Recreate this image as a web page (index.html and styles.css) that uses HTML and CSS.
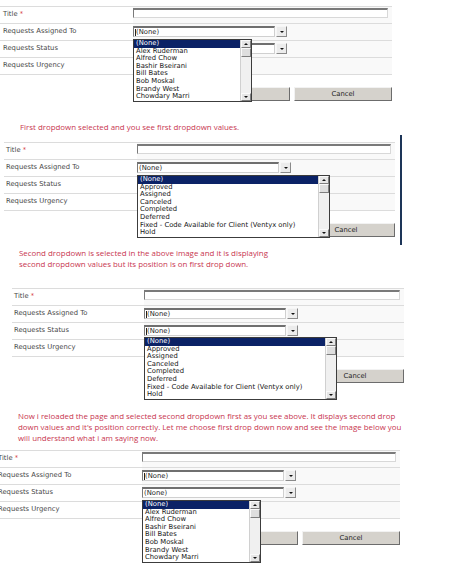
FILE: index.html
```html
<!DOCTYPE html>
<html>
<head>
<meta charset="utf-8">
<link rel="stylesheet" href="styles.css">
</head>
<body>
<div class="page">

  <!-- Panel 1 -->
  <div class="shot s1">
    <div class="sheet">
      <div class="form">
        <div class="row"><div class="lbl">Title <span class="req">*</span></div><div class="fld"><span class="input"></span></div></div>
        <div class="row"><div class="lbl">Requests Assigned To</div><div class="fld">
          <div class="select"><span class="val"><i class="caret"></i>(None)</span><span class="arr"><b></b></span></div>
          <div class="list">
            <div class="items">
              <div class="item sel">(None)</div>
              <div class="item">Alex Ruderman</div>
              <div class="item">Alfred Chow</div>
              <div class="item">Bashir Bseirani</div>
              <div class="item">Bill Bates</div>
              <div class="item">Bob Moskal</div>
              <div class="item">Brandy West</div>
              <div class="item">Chowdary Marri</div>
            </div>
            <div class="sb"><span class="up"><b></b></span><span class="thumb"></span><span class="track"></span><span class="down"><b></b></span></div>
          </div>
        </div></div>
        <div class="row"><div class="lbl">Requests Status</div><div class="fld">
          <div class="select"><span class="val">(None)</span><span class="arr"><b></b></span></div>
        </div></div>
        <div class="row"><div class="lbl">Requests Urgency</div><div class="fld"></div></div>
      </div>
      <div class="btns"><span class="btn">OK</span><span class="btn">Cancel</span></div>
    </div>
  </div>
  <p class="note n1">First dropdown selected and you see first dropdown values.</p>

  <!-- Panel 2 -->
  <div class="shot s2">
    <div class="sheet">
      <div class="form">
        <div class="row"><div class="lbl">Title <span class="req">*</span></div><div class="fld"><span class="input"></span></div></div>
        <div class="row"><div class="lbl">Requests Assigned To</div><div class="fld">
          <div class="select"><span class="val">(None)</span><span class="arr"><b></b></span></div>
          <div class="list wide">
            <div class="items">
              <div class="item sel">(None)</div>
              <div class="item">Approved</div>
              <div class="item">Assigned</div>
              <div class="item">Canceled</div>
              <div class="item">Completed</div>
              <div class="item">Deferred</div>
              <div class="item">Fixed - Code Available for Client (Ventyx only)</div>
              <div class="item">Hold</div>
            </div>
            <div class="sb"><span class="up"><b></b></span><span class="thumb"></span><span class="track"></span><span class="down"><b></b></span></div>
          </div>
        </div></div>
        <div class="row"><div class="lbl">Requests Status</div><div class="fld">
          <div class="select"><span class="val">(None)</span><span class="arr"><b></b></span></div>
        </div></div>
        <div class="row"><div class="lbl">Requests Urgency</div><div class="fld"></div></div>
      </div>
      <div class="btns"><span class="btn">OK</span><span class="btn">Cancel</span></div>
    </div>
  </div>
  <p class="note n2">Second dropdown is selected in the above image and it is displaying<br>second dropdown values but its position is on first drop down.</p>

  <!-- Panel 3 -->
  <div class="shot s3">
    <div class="sheet">
      <div class="form">
        <div class="row"><div class="lbl">Title <span class="req">*</span></div><div class="fld"><span class="input"></span></div></div>
        <div class="row"><div class="lbl">Requests Assigned To</div><div class="fld">
          <div class="select"><span class="val"><i class="caret"></i>(None)</span><span class="arr"><b></b></span></div>
        </div></div>
        <div class="row"><div class="lbl">Requests Status</div><div class="fld">
          <div class="select"><span class="val"><i class="caret"></i>(None)</span><span class="arr"><b></b></span></div>
          <div class="list wide">
            <div class="items">
              <div class="item sel">(None)</div>
              <div class="item">Approved</div>
              <div class="item">Assigned</div>
              <div class="item">Canceled</div>
              <div class="item">Completed</div>
              <div class="item">Deferred</div>
              <div class="item">Fixed - Code Available for Client (Ventyx only)</div>
              <div class="item">Hold</div>
            </div>
            <div class="sb"><span class="up"><b></b></span><span class="thumb"></span><span class="track"></span><span class="down"><b></b></span></div>
          </div>
        </div></div>
        <div class="row"><div class="lbl">Requests Urgency</div><div class="fld"></div></div>
      </div>
      <div class="btns"><span class="btn">OK</span><span class="btn">Cancel</span></div>
    </div>
  </div>
  <p class="note n3">Now i reloaded the page and selected second dropdown first as you see above. It displays second drop<br>down values and it's position correctly. Let me choose first drop down now and see the image below you<br>will understand what i am saying now.</p>

  <!-- Panel 4 -->
  <div class="shot s4">
    <div class="sheet">
      <div class="form">
        <div class="row"><div class="lbl">Title <span class="req">*</span></div><div class="fld"><span class="input"></span></div></div>
        <div class="row"><div class="lbl">Requests Assigned To</div><div class="fld">
          <div class="select"><span class="val"><i class="caret"></i>(None)</span><span class="arr"><b></b></span></div>
        </div></div>
        <div class="row"><div class="lbl">Requests Status</div><div class="fld">
          <div class="select"><span class="val">(None)</span><span class="arr"><b></b></span></div>
          <div class="list">
            <div class="items">
              <div class="item sel">(None)</div>
              <div class="item">Alex Ruderman</div>
              <div class="item">Alfred Chow</div>
              <div class="item">Bashir Bseirani</div>
              <div class="item">Bill Bates</div>
              <div class="item">Bob Moskal</div>
              <div class="item">Brandy West</div>
              <div class="item">Chowdary Marri</div>
            </div>
            <div class="sb"><span class="up"><b></b></span><span class="thumb"></span><span class="track"></span><span class="down"><b></b></span></div>
          </div>
        </div></div>
        <div class="row"><div class="lbl">Requests Urgency</div><div class="fld"></div></div>
      </div>
      <div class="btns"><span class="btn">OK</span><span class="btn">Cancel</span></div>
    </div>
  </div>

</div>
</body>
</html>
```

FILE: styles.css
```css
html, body {
  margin: 0;
  padding: 0;
  background: #ffffff;
}
body {
  width: 474px;
  height: 579px;
  overflow: hidden;
  font-family: "DejaVu Sans", Verdana, sans-serif;
}
.page {
  display: flex;
  flex-direction: column;
}

/* screenshot panels */
.shot {
  position: relative;
}
.s1 { margin-top: 6px; }
.s2 {
  margin-top: 2px;
  width: 400px;
  padding: 7px 0 8px 0;
  border-right: 2px solid #1d3558;
}
.s3 { margin-top: 18px; }
.s4 { margin-top: 6px; }

.sheet {
  display: flex;
  flex-direction: column;
}
.s1 .sheet { margin-left: 0; width: 392px; --lc: 133px; --lp: 3px; }
.s2 .sheet { margin-left: 4px; width: 391px; --lc: 133px; --lp: 2px; }
.s3 .sheet { margin-left: 12px; width: 392px; --lc: 132px; --lp: 2px; }
.s4 .sheet { margin-left: -4px; width: 404px; --lc: 146px; --lp: 2px; }

.form {
  display: flex;
  flex-direction: column;
  border-bottom: 1px solid #dcdcdc;
}
.row {
  display: grid;
  grid-template-columns: var(--lc) 1fr;
  height: 17px;
  box-sizing: border-box;
  border-top: 1px solid #dcdcdc;
}
.lbl {
  padding-left: var(--lp);
  padding-top: 3px;
  font-size: 6.8px;
  line-height: 8px;
  color: #474747;
  white-space: nowrap;
}
.req { color: #d2302f; }
.fld {
  position: relative;
  background: #f9f9f9;
}

.input {
  display: block;
  width: calc(100% - 4px);
  height: 10px;
  margin-top: 1px;
  box-sizing: border-box;
  background: #ffffff;
  border-style: solid;
  border-width: 2px 1px 1px 1px;
  border-color: #7a7a7a #d8d8d8 #d8d8d8 #7a7a7a;
}

.select {
  display: flex;
  width: 154px;
  height: 11px;
  margin-top: 2px;
  box-sizing: border-box;
}
.select .val {
  flex: 1;
  display: flex;
  align-items: center;
  background: #ffffff;
  border-style: solid;
  border-width: 2px 1px 1px 1px;
  border-color: #6f6f6f #d0d0d0 #d0d0d0 #7a7a7a;
  font-size: 6.8px;
  line-height: 8px;
  color: #1a1a1a;
  padding-left: 1px;
  white-space: nowrap;
  overflow: hidden;
}
.caret {
  display: inline-block;
  width: 1px;
  height: 7px;
  background: #222;
}
.select .arr {
  width: 11px;
  margin-left: 1px;
  box-sizing: border-box;
  background: #ececec;
  border: 1px solid;
  border-color: #f6f6f6 #8a8a8a #8a8a8a #f6f6f6;
  display: flex;
  align-items: center;
  justify-content: center;
}
.arr b, .down b {
  display: block;
  width: 0;
  height: 0;
  border-left: 2px solid transparent;
  border-right: 2px solid transparent;
  border-top: 2px solid #111;
}
.up b {
  display: block;
  width: 0;
  height: 0;
  border-left: 2px solid transparent;
  border-right: 2px solid transparent;
  border-bottom: 2px solid #111;
}

/* open dropdown list (overlay) */
.list {
  position: absolute;
  left: 0;
  top: 15px;
  width: 119px;
  height: 63px;
  box-sizing: border-box;
  display: flex;
  background: #ffffff;
  border: 1px solid #3c3c3c;
  z-index: 5;
}
.s3 .list { top: 14px; }
.list.wide { width: 193px; }
.items {
  flex: 1;
  overflow: hidden;
}
.item {
  height: 7.6px;
  font-size: 6.8px;
  line-height: 7.6px;
  padding-left: 2px;
  color: #151515;
  white-space: nowrap;
}
.item.sel {
  background: #0b2266;
  color: #ffffff;
}
.sb {
  width: 10px;
  display: flex;
  flex-direction: column;
  background: #f0f0f0;
  border-left: 1px solid #d0d0d0;
}
.sb .up, .sb .down {
  height: 8px;
  box-sizing: border-box;
  background: #e6e6e6;
  border: 1px solid;
  border-color: #fafafa #7d7d7d #7d7d7d #fafafa;
  display: flex;
  align-items: center;
  justify-content: center;
}
.sb .thumb {
  height: 9px;
  box-sizing: border-box;
  background: #dedede;
  border: 1px solid;
  border-color: #fafafa #7d7d7d #7d7d7d #fafafa;
}
.sb .track { flex: 1; }

/* buttons */
.btns {
  display: flex;
  justify-content: flex-end;
  gap: 4px;
  margin-top: 12px;
}
.btn {
  width: 98px;
  height: 14px;
  box-sizing: border-box;
  background: #d5d2cc;
  border: 1px solid;
  border-color: #f2f2f2 #6c6c6c #6c6c6c #f2f2f2;
  font-size: 6.8px;
  line-height: 12px;
  text-align: center;
  color: #1e1e1e;
}

/* captions */
.note {
  margin: 0;
  font-family: "Open Sans", "Noto Sans", sans-serif;
  font-size: 7.9px;
  line-height: 11px;
  color: #c8364f;
  white-space: nowrap;
}
.n1 { margin-top: 21px; padding-left: 20px; }
.n2 { margin-top: 3px; padding-left: 19px; }
.n3 { margin-top: 28px; padding-left: 18px; }
```
